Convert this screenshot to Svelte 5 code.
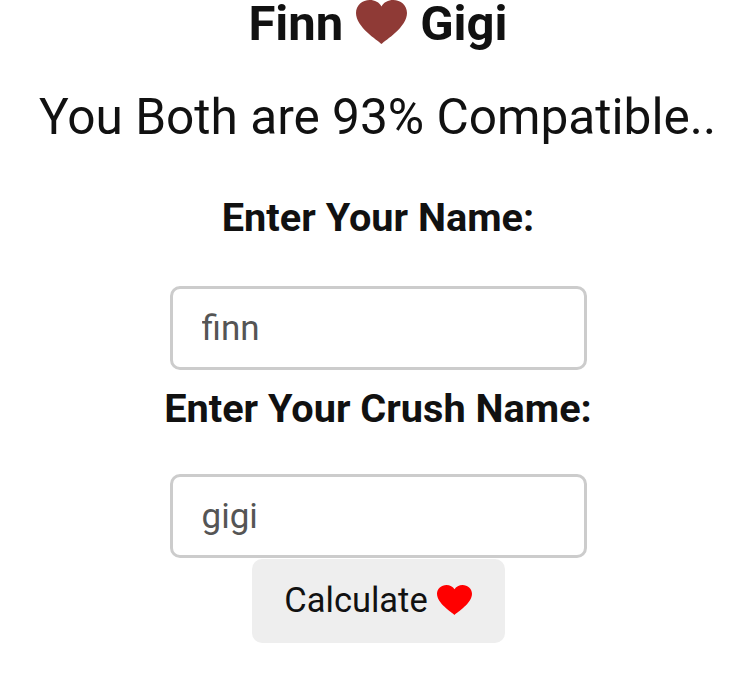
<script>
  let name = $state('finn');
  let crush = $state('gigi');
</script>

<main class="page">
  <h1 class="title">
    <span>Finn</span>
    <svg class="heart big" viewBox="0 0 24 22" preserveAspectRatio="none" aria-hidden="true"><path d="M12 22 C10 20 0 13.5 0 6.5 C0 2.6 3 0 6.5 0 C8.8 0 11 1.2 12 3.2 C13 1.2 15.2 0 17.5 0 C21 0 24 2.6 24 6.5 C24 13.5 14 20 12 22 Z"/></svg>
    <span>Gigi</span>
  </h1>
  <p class="result">You Both are 93% Compatible..</p>
  <form class="form" onsubmit={(e) => e.preventDefault()}>
    <label class="label" for="name">Enter Your Name:</label>
    <input id="name" class="field" bind:value={name} />
    <label class="label second" for="crush">Enter Your Crush Name:</label>
    <input id="crush" class="field" bind:value={crush} />
    <button class="calc" type="submit">
      <span class="calc-text">Calculate</span>
      <svg class="heart small" viewBox="0 0 24 22" preserveAspectRatio="none" aria-hidden="true"><path d="M12 22 C10 20 0 13.5 0 6.5 C0 2.6 3 0 6.5 0 C8.8 0 11 1.2 12 3.2 C13 1.2 15.2 0 17.5 0 C21 0 24 2.6 24 6.5 C24 13.5 14 20 12 22 Z"/></svg>
    </button>
  </form>
</main>

<style>
  :global(body) {
    margin: 0;
    background: #fff;
    overflow: hidden;
  }
  .page {
    font-family: Roboto, sans-serif;
    color: #111;
    text-align: center;
    height: 673px;
  }
  .title {
    margin: 0;
    height: 48px;
    display: flex;
    justify-content: center;
    align-items: center;
    gap: 13px;
    padding-left: 1px;
    font-size: 49px;
    font-weight: 700;
    line-height: 48px;
  }
  .heart.big {
    width: 51px;
    height: 44px;
    margin-top: -5px;
    fill: #8f3a36;
  }
  .result {
    margin: 40px 0 0;
    font-size: 49.6px;
    font-weight: 400;
    line-height: 58px;
  }
  .form {
    display: flex;
    flex-direction: column;
    align-items: center;
    padding-left: 1px;
  }
  .label {
    margin-top: 51px;
    font-size: 39.7px;
    font-weight: 700;
    line-height: 42px;
  }
  .label.second {
    margin-top: 18px;
  }
  .field {
    box-sizing: border-box;
    width: 417px;
    height: 84px;
    margin-top: 47px;
    padding: 0 29px;
    border: 3px solid #ccc;
    border-radius: 10px;
    font-family: Roboto, sans-serif;
    font-size: 35px;
    color: #555;
    outline: none;
    background: #fff;
  }
  .second + .field {
    margin-top: 44px;
  }
  .calc {
    box-sizing: border-box;
    width: 253px;
    height: 84px;
    margin-top: 1px;
    display: flex;
    align-items: center;
    justify-content: center;
    gap: 9px;
    border: 0;
    border-radius: 10px;
    background: #eee;
    color: #111;
    font-family: Roboto, sans-serif;
    font-size: 34.5px;
  }
  .calc-text {
    margin-top: -2px;
  }
  .heart.small {
    width: 35px;
    height: 30px;
    margin-top: -2px;
    fill: #f00;
  }
</style>
